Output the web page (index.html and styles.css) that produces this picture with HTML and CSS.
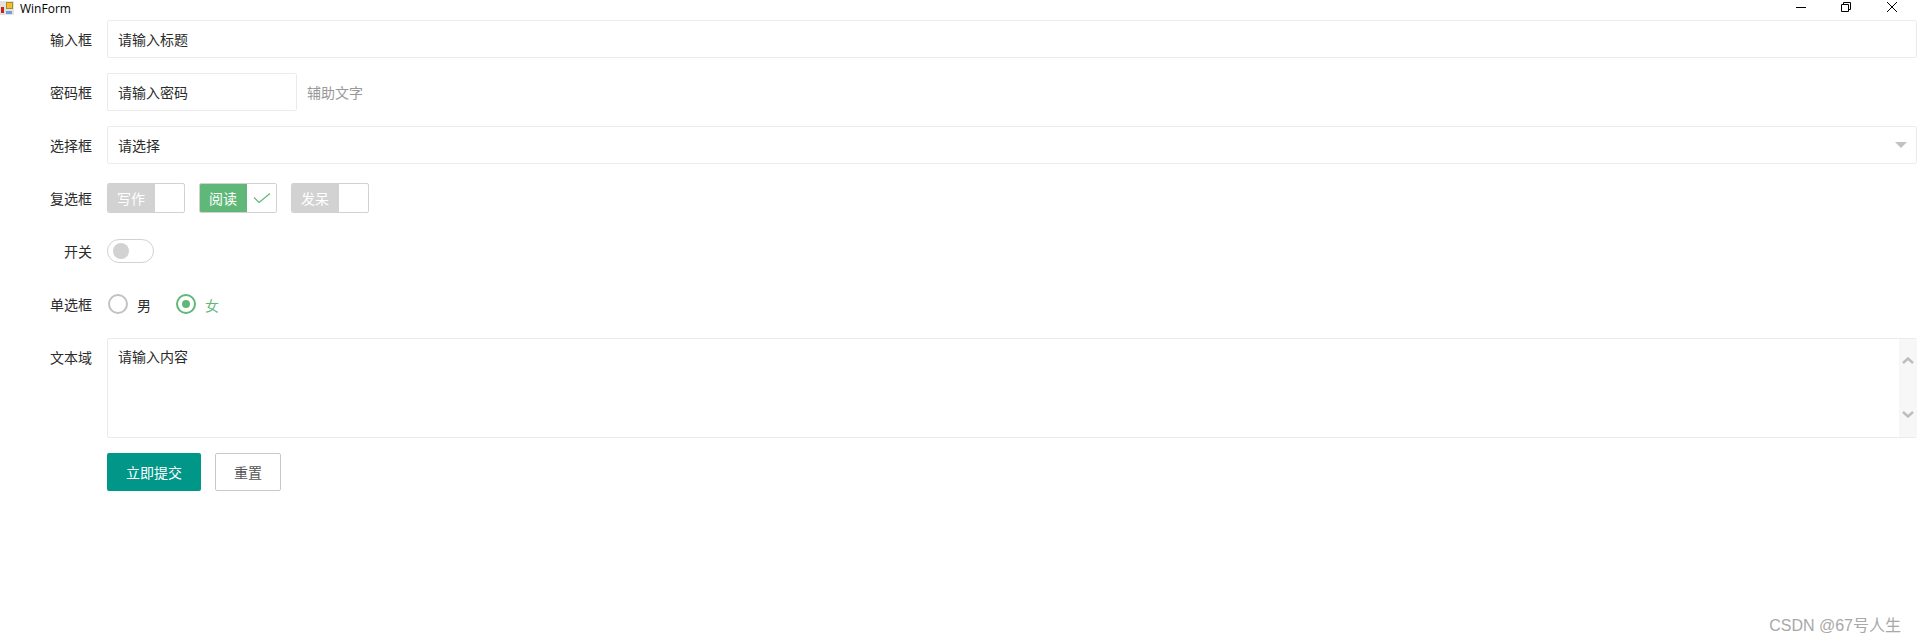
FILE: index.html
```html
<!DOCTYPE html>
<html lang="zh-CN">
<head>
    <meta charset="UTF-8">
    <title>WinForm</title>
    <link rel="stylesheet" href="styles.css">
</head>
<body>
    <div class="titlebar">
        <div class="title">
            <svg class="app-icon" width="14" height="14" viewBox="0 0 14 14">
                <rect x="0" y="0" width="14" height="14" fill="#e2e2e2"/>
                <rect x="6.5" y="1.5" width="6" height="6" fill="#f0bf2c" stroke="#b08a2a"/>
                <rect x="1" y="6" width="3" height="6" fill="#c9231d"/>
                <rect x="6" y="10" width="6" height="3" fill="#6f9fe0"/>
            </svg>
            <span>WinForm</span>
        </div>
        <div class="win-btns">
            <svg width="10" height="14" viewBox="0 0 10 14"><path d="M0 7.5H10" stroke="#000" fill="none"/></svg>
            <svg class="restore" width="10" height="14" viewBox="0 0 10 14"><path d="M0.5 4.5H7.5V11.5H0.5ZM2.5 4.5V2.5H9.5V9.5H7.5" stroke="#000" fill="none"/></svg>
            <svg width="10" height="14" viewBox="0 0 10 14"><path d="M0 2L10 12M10 2L0 12" stroke="#000" fill="none"/></svg>
        </div>
    </div>

    <form class="form">
        <div class="form-item">
            <label class="form-label">输入框</label>
            <input class="input grow" type="text" value="请输入标题">
        </div>
        <div class="form-item">
            <label class="form-label">密码框</label>
            <input class="input short" type="text" value="请输入密码">
            <span class="aux">辅助文字</span>
        </div>
        <div class="form-item">
            <label class="form-label">选择框</label>
            <div class="input grow select">
                <span>请选择</span>
                <i class="caret"></i>
            </div>
        </div>
        <div class="form-item">
            <label class="form-label">复选框</label>
            <div class="checks">
                <div class="check"><span class="check-text">写作</span><span class="check-box"></span></div>
                <div class="check on">
                    <span class="check-text">阅读</span>
                    <span class="check-box">
                        <svg width="18" height="10" viewBox="0 0 18 10"><path d="M1 4.5L6 9.5L17 0.5" stroke="#5fb878" stroke-width="1.2" fill="none"/></svg>
                    </span>
                </div>
                <div class="check"><span class="check-text">发呆</span><span class="check-box"></span></div>
            </div>
        </div>
        <div class="form-item">
            <label class="form-label">开关</label>
            <div class="switch"><i class="knob"></i></div>
        </div>
        <div class="form-item">
            <label class="form-label">单选框</label>
            <div class="radios">
                <div class="radio"><i class="dot"></i><span>男</span></div>
                <div class="radio on"><i class="dot"></i><span>女</span></div>
            </div>
        </div>
        <div class="form-item top">
            <label class="form-label area-label">文本域</label>
            <div class="area-wrap">
                <textarea class="area">请输入内容</textarea>
                <div class="scroll">
                    <svg width="12" height="7" viewBox="0 0 12 7"><path d="M1 6L6 1.5L11 6" stroke="#bdbdbd" stroke-width="2.4" fill="none"/></svg>
                    <svg width="12" height="7" viewBox="0 0 12 7"><path d="M1 1L6 5.5L11 1" stroke="#bdbdbd" stroke-width="2.4" fill="none"/></svg>
                </div>
            </div>
        </div>
        <div class="form-item btns">
            <button class="btn primary" type="button">立即提交</button>
            <button class="btn" type="button">重置</button>
        </div>
    </form>

    <div class="watermark">CSDN @67号人生</div>
</body>
</html>
```

FILE: styles.css
```css
* {
    box-sizing: border-box;
}

html, body {
    height: 100%;
}

body {
    margin: 0;
    position: relative;
    overflow: hidden;
    background-color: #fff;
    color: #2b2b2b;
    font-family: "Noto Sans CJK SC", "Noto Sans", sans-serif;
    font-size: 14px;
}

/* titlebar */
.titlebar {
    height: 20px;
    display: flex;
    justify-content: space-between;
}

.title {
    display: flex;
    align-items: flex-start;
    gap: 6px;
    padding-top: 1px;
    color: #000;
    font-family: "Open Sans", sans-serif;
    font-size: 12px;
    line-height: 15px;
}

.win-btns {
    display: flex;
    gap: 35px;
    padding-right: 20px;
    align-items: flex-start;
}

.win-btns svg {
    display: block;
}

.win-btns .restore {
    margin-right: 1px;
}

/* form */
.form-item {
    display: flex;
    align-items: center;
    height: 38px;
    margin-bottom: 15px;
}

.form-item.top {
    height: 100px;
    align-items: flex-start;
}

.form-label {
    width: 92px;
    margin-right: 15px;
    text-align: right;
    flex-shrink: 0;
}

.area-label {
    padding-top: 9px;
}

.input {
    height: 38px;
    border: 1px solid #ebebeb;
    border-radius: 2px;
    padding: 0 10px;
    font: inherit;
    color: #2b2b2b;
    background-color: #fff;
}

.grow {
    flex: 1;
}

.short {
    width: 190px;
}

.aux {
    margin-left: 10px;
    color: #999;
}

.select {
    display: flex;
    align-items: center;
    justify-content: space-between;
    padding-right: 9px;
}

.caret {
    width: 0;
    height: 0;
    border-left: 6px solid transparent;
    border-right: 6px solid transparent;
    border-top: 6px solid #c2c2c2;
}

/* checkbox */
.checks {
    display: flex;
    gap: 14px;
}

.check {
    display: flex;
    height: 30px;
    border: 1px solid #d2d2d2;
    border-radius: 2px;
    overflow: hidden;
}

.check-text {
    background-color: #d2d2d2;
    color: #fff;
    padding: 0 10px 0 9px;
    line-height: 28px;
}

.check-box {
    width: 29px;
    display: flex;
    align-items: center;
    justify-content: center;
}

.check.on .check-text {
    background-color: #5fb878;
    margin: -1px 0 -1px -1px;
    padding: 1px 10px;
}

/* switch */
.switch {
    width: 47px;
    height: 24px;
    border: 1px solid #d2d2d2;
    border-radius: 12px;
    display: flex;
    align-items: center;
    padding-left: 5px;
}

.knob {
    width: 16px;
    height: 16px;
    border-radius: 50%;
    background-color: #d2d2d2;
}

/* radio */
.radios {
    display: flex;
    gap: 25px;
    margin-left: 1px;
}

.radio {
    display: flex;
    align-items: center;
    gap: 9px;
}

.radio span {
    padding-top: 2px;
}

.dot {
    width: 20px;
    height: 20px;
    border: 2px solid #c2c2c2;
    border-radius: 50%;
    display: flex;
    align-items: center;
    justify-content: center;
}

.radio.on {
    color: #5fb878;
}

.radio.on .dot {
    border-color: #5fb878;
}

.radio.on .dot::after {
    content: "";
    width: 8px;
    height: 8px;
    border-radius: 50%;
    background-color: #5fb878;
}

/* textarea */
.area-wrap {
    flex: 1;
    height: 100px;
    position: relative;
}

.area {
    display: block;
    width: 100%;
    height: 100%;
    border: 1px solid #ebebeb;
    border-radius: 2px;
    padding: 7px 10px;
    font: inherit;
    line-height: 20px;
    color: #2b2b2b;
    resize: none;
    overflow: hidden;
    outline: none;
}

.scroll {
    position: absolute;
    top: 1px;
    right: 0;
    bottom: 1px;
    width: 18px;
    background-color: #f7f7f7;
    display: flex;
    flex-direction: column;
    align-items: center;
    justify-content: space-between;
    padding: 18px 0 19px;
}

/* buttons */
.btns {
    padding-left: 107px;
    gap: 14px;
}

.btn {
    height: 38px;
    padding: 0 18px;
    border: 1px solid #c9c9c9;
    border-radius: 2px;
    background-color: #fff;
    color: #555;
    font: inherit;
}

.btn.primary {
    padding: 0 19px;
    border: none;
    background-color: #009688;
    color: #fff;
}

.watermark {
    position: absolute;
    right: 16px;
    bottom: 7px;
    color: #a8a8a8;
    font-family: "Liberation Sans", "Noto Sans CJK SC", sans-serif;
    font-size: 16px;
    line-height: 20px;
}
```
